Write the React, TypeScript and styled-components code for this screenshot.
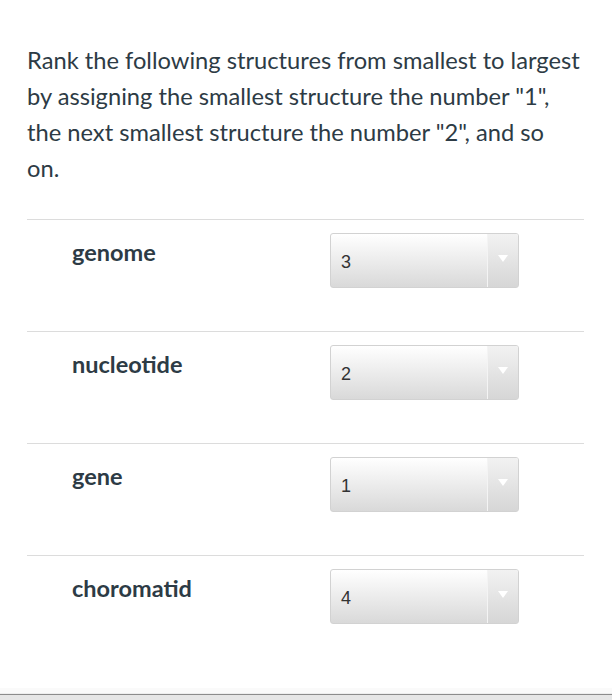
import React from "react";
import styled, {createGlobalStyle} from "styled-components";

const GlobalStyle = createGlobalStyle`
  html, body {
    margin: 0;
    background: #ffffff;
  }
  body {
    font-family: Lato, "Open Sans", "Liberation Sans", sans-serif;
    color: #2d3b45;
  }
`;

const items = [
  {label: "genome", value: "3"},
  {label: "nucleotide", value: "2"},
  {label: "gene", value: "1"},
  {label: "choromatid", value: "4"},
];

export default function App() {
  return (
    <Page>
      <GlobalStyle />
      <Question>
        <Prompt>
          Rank the following structures from smallest to largest by assigning the smallest structure the
          number "1", the next smallest structure the number "2", and so
          <br />
          on.
        </Prompt>

        <Answers>
          {items.map((item) => (
            <Row key={item.label}>
              <Label>{item.label}</Label>
              <Select>
                <SelectValue>{item.value}</SelectValue>
                <SelectArrow>
                  <svg width="10" height="8" viewBox="0 0 10 8">
                    <path d="M0 0 L10 0 L5 7 Z" fill="#ffffff" />
                  </svg>
                </SelectArrow>
              </Select>
            </Row>
          ))}
        </Answers>
      </Question>
      <Footer />
    </Page>
  );
}

const Page = styled.div`
  display: flex;
  flex-direction: column;
  min-height: 700px;
`;

const Question = styled.div`
  padding: 42px 28px 0 27px;
`;

const Prompt = styled.p`
  margin: 0;
  font-size: 23.7px;
  line-height: 36px;
`;

const Answers = styled.div`
  margin-top: 33px;
`;

const Row = styled.div`
  display: grid;
  grid-template-columns: 303px 189px;
  align-items: start;
  height: 112px;
  box-sizing: border-box;
  border-top: 1px solid #dcdcdc;
  padding-top: 13px;
`;

const Label = styled.div`
  padding: 5px 0 0 45px;
  font-size: 23.5px;
  font-weight: 700;
  line-height: 28px;
`;

const Select = styled.div`
  display: flex;
  height: 55px;
  box-sizing: border-box;
  border: 1px solid #d2d2d2;
  border-radius: 3px;
  background: linear-gradient(#ffffff, #d9d9d9);
  overflow: hidden;
`;

const SelectValue = styled.div`
  flex: 1;
  padding: 16px 0 0 10px;
  font-family: "Liberation Sans", Arial, sans-serif;
  font-size: 18px;
  line-height: 24px;
  color: #333333;
`;

const SelectArrow = styled.div`
  display: flex;
  align-items: center;
  justify-content: center;
  width: 31px;
  padding-bottom: 4px;
  box-sizing: border-box;
  border-left: 1px solid #f4f4f4;
  background: linear-gradient(#f2f2f2, #d6d6d6);
`;

const Footer = styled.div`
  margin-top: auto;
  height: 12px;
  background: linear-gradient(#fafafa 0 5px, #eeeeee 5px 6px, #8c8c8c 6px 7px, #e6e6e6 7px);
`;
